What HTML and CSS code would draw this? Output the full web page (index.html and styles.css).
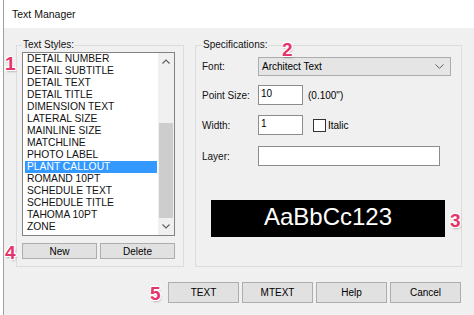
FILE: index.html
```html
<!DOCTYPE html>
<html lang="en">
<head>
    <meta charset="UTF-8">
    <title>Text Manager</title>
    <link rel="stylesheet" href="styles.css">
</head>
<body>
    <div class="window">
        <div class="titlebar">Text Manager</div>
        <div class="client">
            <div class="groups">
                <fieldset class="group group-styles">
                    <legend>Text Styles:</legend>
                    <div class="listbox">
                        <ul class="list-items">
                            <li>DETAIL NUMBER</li>
                            <li>DETAIL SUBTITLE</li>
                            <li>DETAIL TEXT</li>
                            <li>DETAIL TITLE</li>
                            <li>DIMENSION TEXT</li>
                            <li>LATERAL SIZE</li>
                            <li>MAINLINE SIZE</li>
                            <li>MATCHLINE</li>
                            <li>PHOTO LABEL</li>
                            <li class="selected">PLANT CALLOUT</li>
                            <li>ROMAND 10PT</li>
                            <li>SCHEDULE TEXT</li>
                            <li>SCHEDULE TITLE</li>
                            <li>TAHOMA 10PT</li>
                            <li>ZONE</li>
                        </ul>
                        <div class="scrollbar">
                            <div class="scroll-arrow">
                                <svg width="8" height="5" viewBox="0 0 8 5"><polyline points="0.5,4.5 4,1 7.5,4.5" fill="none" stroke="#606060" stroke-width="1.2"/></svg>
                            </div>
                            <div class="scroll-track"><div class="scroll-thumb"></div></div>
                            <div class="scroll-arrow">
                                <svg width="8" height="5" viewBox="0 0 8 5"><polyline points="0.5,0.5 4,4 7.5,0.5" fill="none" stroke="#606060" stroke-width="1.2"/></svg>
                            </div>
                        </div>
                    </div>
                    <div class="list-buttons">
                        <button class="btn">New</button>
                        <button class="btn">Delete</button>
                    </div>
                </fieldset>

                <fieldset class="group group-specs">
                    <legend>Specifications:</legend>
                    <div class="field-row row-font">
                        <label>Font:</label>
                        <div class="select">
                            <span>Architect Text</span>
                            <svg width="9" height="5" viewBox="0 0 9 5"><polyline points="0.5,0.5 4.5,4.3 8.5,0.5" fill="none" stroke="#606060" stroke-width="1"/></svg>
                        </div>
                    </div>
                    <div class="field-row row-size">
                        <label>Point Size:</label>
                        <div class="textbox short">10</div>
                        <span class="hint">(0.100")</span>
                    </div>
                    <div class="field-row row-width">
                        <label>Width:</label>
                        <div class="textbox short">1</div>
                        <span class="checkbox"></span>
                        <span class="check-label">Italic</span>
                    </div>
                    <div class="field-row row-layer">
                        <label>Layer:</label>
                        <div class="textbox long"></div>
                    </div>
                    <div class="preview">AaBbCc123</div>
                </fieldset>
            </div>

            <div class="actions">
                <button class="btn btn-action">TEXT</button>
                <button class="btn btn-action">MTEXT</button>
                <button class="btn btn-action">Help</button>
                <button class="btn btn-action">Cancel</button>
            </div>
        </div>
    </div>

    <span class="callout callout-1">1</span>
    <span class="callout callout-2">2</span>
    <span class="callout callout-3">3</span>
    <span class="callout callout-4">4</span>
    <span class="callout callout-5">5</span>
</body>
</html>
```

FILE: styles.css
```css
body {
    margin: 0;
    background: #fff;
    font-family: 'Liberation Sans', Arial, sans-serif;
    font-size: 10px;
    color: #000;
    position: relative;
}
.window {
    margin-left: 3px;
    border-left: 1px solid #a0a0a0;
    height: 315px;
    display: flex;
    flex-direction: column;
    overflow: hidden;
}
.titlebar {
    height: 28px;
    line-height: 29px;
    padding-left: 8px;
    background: #fff;
    font-size: 10.5px;
    color: #111;
}
.client {
    flex: 1;
    background: #f0f0f0;
    padding: 11px 12px 0 12px;
}
.groups {
    display: flex;
    gap: 11px;
}
.group {
    margin: 0;
    border: 1px solid #dcdcdc;
    min-width: 0;
}
.group legend {
    padding: 0 1px;
    line-height: 12px;
    font-size: 10px;
    color: #111;
}
.group-styles {
    width: 168px;
    box-sizing: border-box;
    padding: 1px 8px 7px 5px;
}
.group-specs {
    width: 267px;
    box-sizing: border-box;
    padding: 6px 10px 29px 6px;
}

/* list of styles */
.listbox {
    display: flex;
    height: 184px;
    box-sizing: border-box;
    border: 1px solid #828282;
    background: #fff;
}
.list-items {
    flex: 1;
    list-style: none;
    margin: 0;
    padding: 0 1px 0 2px;
}
.list-items li {
    height: 12px;
    line-height: 12px;
    padding-left: 2px;
    font-size: 10.3px;
    color: #111;
    white-space: nowrap;
}
.list-items li.selected {
    background: #3399ff;
    color: #fff;
}
.scrollbar {
    width: 16px;
    display: flex;
    flex-direction: column;
    background: #f0f0f0;
}
.scroll-arrow {
    height: 17px;
    display: flex;
    align-items: center;
    justify-content: center;
}
.scroll-track {
    flex: 1;
    display: flex;
    flex-direction: column;
    justify-content: flex-end;
}
.scroll-thumb {
    height: 95px;
    margin: 0 1px;
    background: #cdcdcd;
}
.list-buttons {
    display: flex;
    gap: 3px;
    margin-top: 7px;
}
.btn {
    background: #e1e1e1;
    border: 1px solid #adadad;
    font-family: 'Liberation Sans', Arial, sans-serif;
    font-size: 10px;
    color: #000;
    padding: 0;
    margin: 0;
}
.list-buttons .btn {
    width: 75px;
    height: 16px;
}

/* specifications */
.field-row {
    display: flex;
    align-items: center;
}
.field-row label {
    width: 56px;
    flex: none;
    color: #111;
}
.row-font { height: 19px; margin-bottom: 9px; }
.row-size { height: 20px; margin-bottom: 10px; }
.row-width { height: 20px; margin-bottom: 11px; }
.row-layer { height: 20px; }
.select {
    flex: 1;
    height: 19px;
    box-sizing: border-box;
    border: 1px solid #acacac;
    background: #e5e5e5;
    display: flex;
    align-items: center;
    justify-content: space-between;
    padding: 0 6px 0 3px;
}
.textbox {
    height: 20px;
    box-sizing: border-box;
    border: 1px solid #8c8c8c;
    background: #fff;
    padding: 2px 0 0 2px;
}
.textbox.short { width: 45px; }
.textbox.long { width: 182px; }
.hint {
    margin-left: 5px;
}
.checkbox {
    width: 13px;
    height: 13px;
    box-sizing: border-box;
    border: 1px solid #333;
    background: #fff;
    margin-left: 10px;
}
.check-label {
    margin-left: 2px;
}
.preview {
    width: 234px;
    height: 37px;
    margin: 34px 0 0 9px;
    background: #000;
    color: #fff;
    font-size: 24px;
    line-height: 34px;
    text-align: center;
}

/* bottom buttons */
.actions {
    display: flex;
    justify-content: flex-end;
    gap: 3px;
    margin-top: 15px;
    padding-right: 1px;
}
.btn-action {
    width: 71px;
    height: 21px;
}

/* numbered callouts laid over the dialog */
.callout {
    position: absolute;
    font-family: 'Liberation Sans', Arial, sans-serif;
    font-weight: bold;
    font-size: 19px;
    line-height: 1;
    color: #e5336c;
    text-shadow: 1px 0 0 #fff, -1px 0 0 #fff, 0 1px 0 #fff, 0 -1px 0 #fff,
                 1px 1px 0 #fff, -1px -1px 0 #fff, 1px -1px 0 #fff, -1px 1px 0 #fff,
                 1px 2px 2px rgba(0,0,0,0.25);
}
.callout-1 { left: 5px; top: 54px; }
.callout-2 { left: 282px; top: 40px; }
.callout-3 { left: 450px; top: 211px; }
.callout-4 { left: 5px; top: 243px; }
.callout-5 { left: 150px; top: 284px; }
```
